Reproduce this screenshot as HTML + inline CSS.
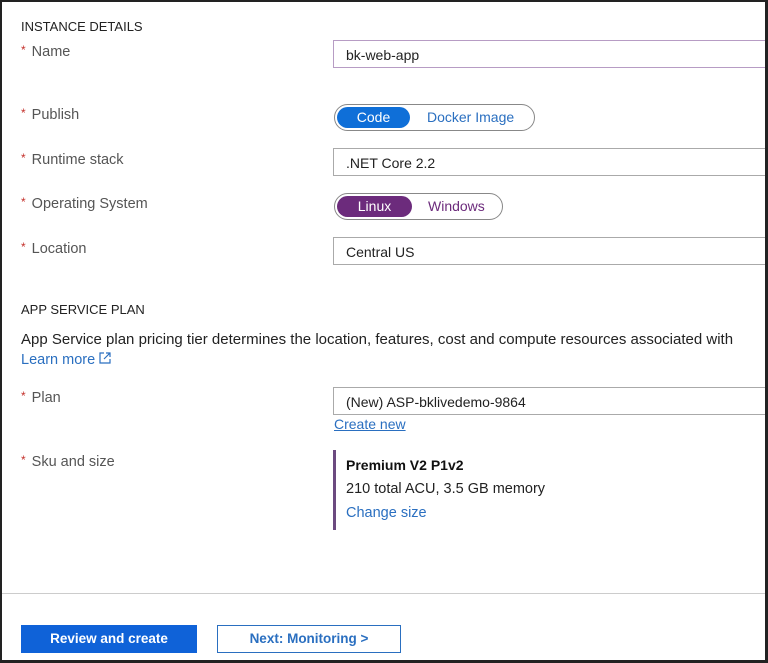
<!DOCTYPE html>
<html><head><style>
*{margin:0;padding:0;box-sizing:border-box}
body{width:768px;height:663px;background:#fff;font-family:"Liberation Sans",sans-serif;font-size:14px;color:#323130;position:relative;overflow:hidden}
.frame{position:absolute;left:0;top:0;width:768px;height:663px;border:2px solid #222;border-right:3px solid #222;border-bottom:3px solid #222;z-index:10;pointer-events:none}
.a{position:absolute;white-space:nowrap}
.lbl{color:#555;font-size:14.5px}
.lbl b{color:#c4312b;font-weight:normal;margin-right:6px;font-size:12px;position:relative;top:-2px}
.h{font-size:13px;color:#222}
.inp{position:absolute;left:333px;width:440px;height:28px;border:1px solid #aaa;background:#fff;padding:6px 12px;font-size:14px;color:#222}
.tog{position:absolute;left:334px;height:27px;border:1px solid #888;border-radius:14px;padding:2px;display:flex;align-items:center;font-size:14px}
.tog span{display:inline-block;height:21px;line-height:21px;border-radius:11px;padding:0 17px}
.link{color:#2a6fc0}
</style></head><body>
<div class="frame"></div>
<div class="a h" style="left:21px;top:19px">INSTANCE DETAILS</div>
<div class="a lbl" style="left:21px;top:44px"><b>*</b>Name</div>
<div class="inp" style="top:40px;border-color:#b79cc4">bk-web-app</div>
<div class="a lbl" style="left:21px;top:107px"><b>*</b>Publish</div>
<div class="tog" style="top:104px;width:201px"><span style="background:#0f6fd8;color:#fff;width:73px;text-align:center;padding:0">Code</span><span class="link" style="padding:0 0 0 17px">Docker Image</span></div>
<div class="a lbl" style="left:21px;top:152px"><b>*</b>Runtime stack</div>
<div class="inp" style="top:148px">.NET Core 2.2</div>
<div class="a lbl" style="left:21px;top:196px"><b>*</b>Operating System</div>
<div class="tog" style="top:193px;width:169px"><span style="background:#6c2b7c;color:#fff;width:75px;text-align:center;padding:0">Linux</span><span style="color:#6c2b7c;padding:0 0 0 16px">Windows</span></div>
<div class="a lbl" style="left:21px;top:241px"><b>*</b>Location</div>
<div class="inp" style="top:237px">Central US</div>
<div class="a h" style="left:21px;top:302px">APP SERVICE PLAN</div>
<div class="a" style="left:21px;top:331px;font-size:15px;color:#222">App Service plan pricing tier determines the location, features, cost and compute resources associated with</div>
<div class="a link" style="left:21px;top:352px;font-size:14.5px">Learn more <svg width="12" height="12" viewBox="0 0 12 12" style="vertical-align:0"><path d="M5 1H1v10h10V7M7 1h4v4M11 1L5 7" fill="none" stroke="#2a6fc0" stroke-width="1.2"/></svg></div>
<div class="a lbl" style="left:21px;top:390px"><b>*</b>Plan</div>
<div class="inp" style="top:387px">(New) ASP-bklivedemo-9864</div>
<div class="a link" style="left:334px;top:416px;text-decoration:underline">Create new</div>
<div class="a lbl" style="left:21px;top:454px"><b>*</b>Sku and size</div>
<div class="a" style="left:333px;top:450px;width:3px;height:80px;background:#6c4a80"></div>
<div class="a" style="left:346px;top:457px;font-weight:bold;color:#111">Premium V2 P1v2</div>
<div class="a" style="left:346px;top:481px;color:#222;font-size:14.5px">210 total ACU, 3.5 GB memory</div>
<div class="a link" style="left:346px;top:505px;font-size:14.5px">Change size</div>
<div class="a" style="left:2px;top:593px;width:763px;height:1px;background:#ccc"></div>
<div class="a" style="left:21px;top:625px;width:176px;height:28px;background:#0f62d8;color:#fff;font-weight:bold;font-size:13.5px;text-align:center;line-height:28px">Review and create</div>
<div class="a" style="left:217px;top:625px;width:184px;height:28px;border:1px solid #2a6fc0;color:#2a6fc0;font-weight:bold;font-size:13.5px;text-align:center;line-height:26px">Next: Monitoring &gt;</div>
</body></html>
